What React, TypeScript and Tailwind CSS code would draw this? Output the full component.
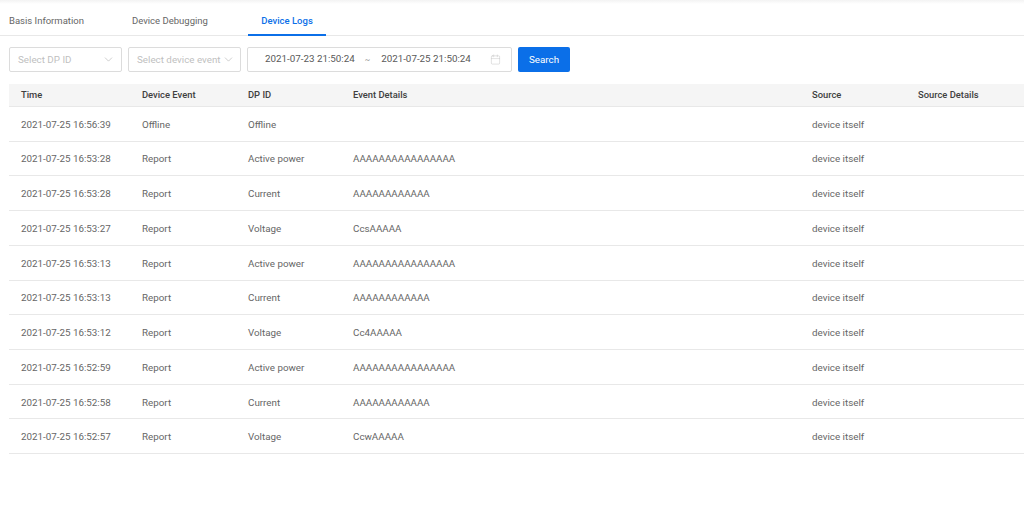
import { ChevronDown, Calendar } from 'lucide-react';

const rows = [
  ['2021-07-25 16:56:39', 'Offline', 'Offline', ''],
  ['2021-07-25 16:53:28', 'Report', 'Active power', 'AAAAAAAAAAAAAAAA'],
  ['2021-07-25 16:53:28', 'Report', 'Current', 'AAAAAAAAAAAA'],
  ['2021-07-25 16:53:27', 'Report', 'Voltage', 'CcsAAAAA'],
  ['2021-07-25 16:53:13', 'Report', 'Active power', 'AAAAAAAAAAAAAAAA'],
  ['2021-07-25 16:53:13', 'Report', 'Current', 'AAAAAAAAAAAA'],
  ['2021-07-25 16:53:12', 'Report', 'Voltage', 'Cc4AAAAA'],
  ['2021-07-25 16:52:59', 'Report', 'Active power', 'AAAAAAAAAAAAAAAA'],
  ['2021-07-25 16:52:58', 'Report', 'Current', 'AAAAAAAAAAAA'],
  ['2021-07-25 16:52:57', 'Report', 'Voltage', 'CcwAAAAA'],
];

const gridCols = 'grid grid-cols-[121px_106px_105px_459px_106px_1fr]';

export default function App() {
  return (
    <div className="h-[512px] w-[1024px] overflow-hidden bg-white text-[9.8px] text-[#666666] font-['Roboto','Noto_Sans',sans-serif]">
      {/* tabs */}
      <div className="h-[4px] bg-gradient-to-b from-[#f3f3f3] to-white" />
      <div className="flex h-[32px] border-b border-[#e8e8e8] pl-[9px] text-[9.5px]">
        <div className="flex w-[123px] items-center pt-[4px]">Basis Information</div>
        <div className="flex w-[116px] items-center pt-[4px]">Device Debugging</div>
        <div className="-mb-px flex w-[78px] items-center justify-center border-b-[2px] border-[#0b6fe8] pt-[4px] font-medium text-[#0b6fe8]">
          Device Logs
        </div>
      </div>

      {/* filters */}
      <div className="ml-[9px] mt-[11px] flex h-[25px] gap-[6px] text-[#bfbfbf]">
        <div className="flex w-[113px] items-center justify-between rounded-[2px] border border-[#dcdcdc] pl-[8px] pr-[6px]">
          <span className="whitespace-nowrap pt-[1px]">Select DP ID</span>
          <ChevronDown size={13} strokeWidth={1} className="text-[#a6a6a6]" />
        </div>
        <div className="flex w-[113px] items-center justify-between rounded-[2px] border border-[#dcdcdc] pl-[8px] pr-[5px]">
          <span className="whitespace-nowrap pt-[1px]">Select device event</span>
          <ChevronDown size={13} strokeWidth={1} className="text-[#a6a6a6]" />
        </div>
        <div className="flex w-[265px] items-center rounded-[2px] border border-[#dcdcdc] pl-[17px] pr-[10px] text-[#595959]">
          <span className="whitespace-nowrap">2021-07-23 21:50:24</span>
          <span className="ml-[10px] text-[8px] text-[#8c8c8c]">~</span>
          <span className="ml-[11px] whitespace-nowrap">2021-07-25 21:50:24</span>
          <Calendar size={11} strokeWidth={1} className="ml-auto text-[#bfbfbf]" />
        </div>
        <button className="flex w-[52px] items-center justify-center rounded-[2px] bg-[#0b6fe8] pt-[1px] text-white">
          Search
        </button>
      </div>

      {/* table */}
      <div className="ml-[9px] mt-[12px]">
        <div className={`${gridCols} h-[23px] items-center border-b border-[#e8e8e8] bg-[#f5f5f5] pt-[1px] text-[9.4px] font-medium text-[#404040]`}>
          <div className="pl-[12px]">Time</div>
          <div className="pl-[12px]">Device Event</div>
          <div className="pl-[12px]">DP ID</div>
          <div className="pl-[12px]">Event Details</div>
          <div className="pl-[12px]">Source</div>
          <div className="pl-[12px]">Source Details</div>
        </div>
        {rows.map((r, i) => (
          <div key={i} className={`${gridCols} h-[34.72px] items-center border-b border-[#e8e8e8] pt-[2.5px]`}>
            <div className="pl-[12px]">{r[0]}</div>
            <div className="pl-[12px]">{r[1]}</div>
            <div className="pl-[12px]">{r[2]}</div>
            <div className="pl-[12px]">{r[3]}</div>
            <div className="pl-[12px]">device itself</div>
            <div />
          </div>
        ))}
      </div>
    </div>
  );
}
